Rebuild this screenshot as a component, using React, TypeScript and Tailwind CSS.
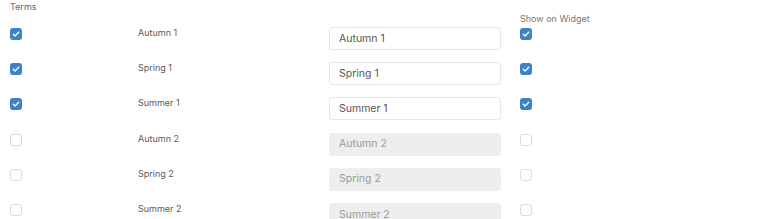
import React from "react";

const rows = [
  { name: "Autumn 1", on: true },
  { name: "Spring 1", on: true },
  { name: "Summer 1", on: true },
  { name: "Autumn 2", on: false },
  { name: "Spring 2", on: false },
  { name: "Summer 2", on: false },
];

function Box({ on }: { on: boolean }) {
  return on ? (
    <span className="flex h-[12px] w-[12px] items-center justify-center rounded-[3px] bg-[#3b82c8]">
      <svg width="8" height="8" viewBox="0 0 8 8" fill="none">
        <path d="M1.3 4.2 L3.1 5.9 L6.7 2.2" stroke="#fff" strokeWidth="1.4" strokeLinecap="round" strokeLinejoin="round" />
      </svg>
    </span>
  ) : (
    <span className="block h-[12px] w-[12px] rounded-[3px] border border-[#dcdcdc] bg-white" />
  );
}

export default function App() {
  return (
    <div className="h-[219px] w-[768px] overflow-hidden bg-white pl-[10px] text-[#555]" style={{ fontFamily: "Inter, 'Noto Sans', sans-serif" }}>
      <div className="grid h-[26px] grid-cols-[128px_191px_191px_1fr]">
        <div className="self-start pt-[1px] text-[9px] leading-[12px] text-[#666]">Terms</div>
        <div />
        <div />
        <div className="self-end pb-[1px] text-[9px] leading-[12px] text-[#777]">Show on Widget</div>
      </div>
      {rows.map((r) => (
        <div key={r.name} className="grid h-[35.2px] grid-cols-[128px_191px_191px_1fr] items-start">
          <div className="mt-[2px]">
            <Box on={r.on} />
          </div>
          <div className="text-[9px] leading-[13px] text-[#5a5a5a]">{r.name}</div>
          <div className="mt-[1px]">
            <div
              className={
                "flex h-[23px] w-[172px] items-center rounded-[3px] border px-[9px] text-[10.5px] " +
                (r.on ? "border-[#e6e6e6] bg-white text-[#555]" : "border-[#eeeeee] bg-[#eeeeee] text-[#999]")
              }
            >
              {r.name}
            </div>
          </div>
          <div className="mt-[2px]">
            <Box on={r.on} />
          </div>
        </div>
      ))}
    </div>
  );
}
